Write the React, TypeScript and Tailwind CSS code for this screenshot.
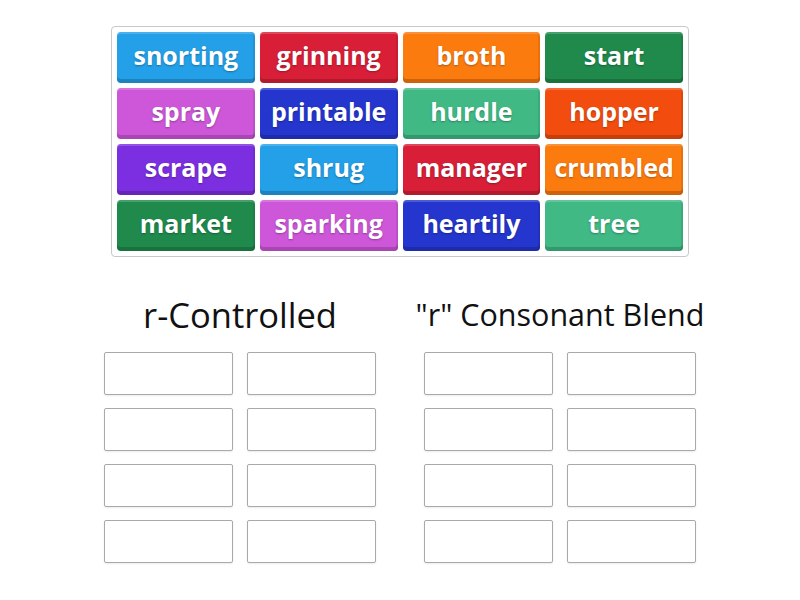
const tiles: { word: string; color: string }[] = [
  { word: 'snorting', color: 'bg-[#23a0e8]' },
  { word: 'grinning', color: 'bg-[#d81f37]' },
  { word: 'broth', color: 'bg-[#fb7b0f]' },
  { word: 'start', color: 'bg-[#1f8a4c]' },
  { word: 'spray', color: 'bg-[#cd57d8]' },
  { word: 'printable', color: 'bg-[#2436cd]' },
  { word: 'hurdle', color: 'bg-[#40b985]' },
  { word: 'hopper', color: 'bg-[#f24d0e]' },
  { word: 'scrape', color: 'bg-[#7c2fe0]' },
  { word: 'shrug', color: 'bg-[#23a0e8]' },
  { word: 'manager', color: 'bg-[#d81f37]' },
  { word: 'crumbled', color: 'bg-[#fb7b0f]' },
  { word: 'market', color: 'bg-[#1f8a4c]' },
  { word: 'sparking', color: 'bg-[#cd57d8]' },
  { word: 'heartily', color: 'bg-[#2436cd]' },
  { word: 'tree', color: 'bg-[#40b985]' },
];

function DropGroup({ title, size }: { title: string; size: string }) {
  return (
    <div className="w-[272px] flex flex-col items-center">
      <div className={`h-[42px] flex items-center justify-center text-[#111] whitespace-nowrap ${size}`}>{title}</div>
      <div className="mt-[16px] w-full grid grid-cols-2 gap-x-[14px] gap-y-[13px]">
        {Array.from({ length: 8 }).map((_, i) => (
          <div
            key={i}
            className="h-[43px] border border-[#a9a9a9] rounded-[2px] bg-white shadow-[0_1px_2px_rgba(0,0,0,0.08)]"
          />
        ))}
      </div>
    </div>
  );
}

export default function App() {
  return (
    <div className="w-[800px] h-[600px] bg-white overflow-hidden font-['Open_Sans',sans-serif]">
      <div className="mt-[26px] mx-auto w-[578px] border border-[#c8c8c8] rounded-[4px] p-[5px]">
        <div className="grid grid-cols-4 gap-[5px]">
          {tiles.map((t) => (
            <div
              key={t.word}
              className={`${t.color} h-[51px] rounded-[4px] flex items-center justify-center text-white font-bold text-[25px] leading-none pb-[4px] shadow-[inset_0_-4px_0_rgba(0,0,0,0.18),inset_-2px_0_0_rgba(0,0,0,0.08),inset_0_2px_0_rgba(255,255,255,0.18)] [text-shadow:0_1px_2px_rgba(0,0,0,0.3)]`}
            >
              {t.word}
            </div>
          ))}
        </div>
      </div>
      <div className="mt-[37px] flex justify-center gap-[48px]">
        <DropGroup title="r-Controlled" size="text-[34.5px]" />
        <DropGroup title={'"r" Consonant Blend'} size="text-[30.5px]" />
      </div>
    </div>
  );
}
